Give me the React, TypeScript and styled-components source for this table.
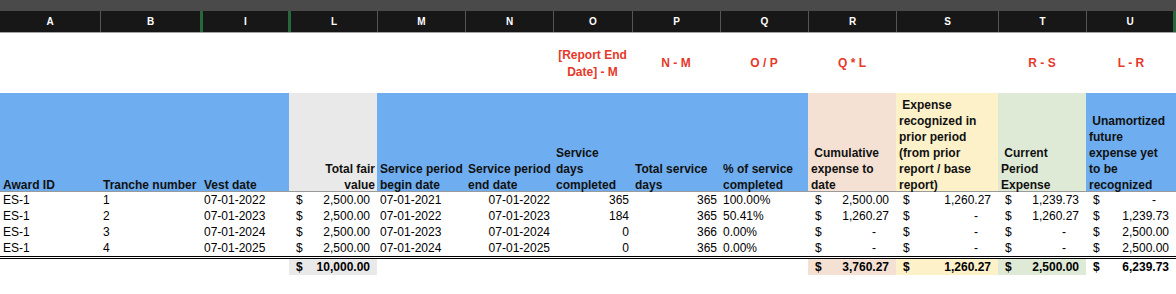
import React from "react";
import styled, { createGlobalStyle } from "styled-components";

const GlobalStyle = createGlobalStyle`
  html, body { margin: 0; padding: 0; background: #ffffff; }
  body { font-family: "Liberation Sans", Arial, sans-serif; }
`;

const BODY_COLS =
  "100px 101px 88px 88px 88px 88px 79px 88px 88px 88px 102px 88px 90px";
const LETTER_COLS =
  "100px 100px 3px 85px 3px 86px 88px 88px 79px 88px 88px 88px 102px 88px 87px 3px";

const BLUE = "#6eaef0";
const GRAY = "#e9e9e9";
const PEACH = "#f5e1d4";
const YELLOW = "#fdf1ca";
const GREEN = "#dfead6";

const Sheet = styled.div`
  width: 1176px;
  height: 294px;
  overflow: hidden;
  background: #fff;
`;

const TopStrip = styled.div`
  height: 11px;
  background: #4a4a4a;
`;

const LetterBar = styled.div`
  display: grid;
  grid-template-columns: ${LETTER_COLS};
  height: 21px;
  background: #171717;
  border-bottom: 1px solid #a3a3a3;
`;

const Letter = styled.div<{ $divider?: boolean }>`
  display: flex;
  align-items: center;
  justify-content: center;
  color: #ffffff;
  font-family: "Liberation Sans", Arial, sans-serif;
  font-weight: bold;
  font-size: 10px;
  border-left: ${(p) => (p.$divider ? "1px solid #555555" : "none")};
`;

const HiddenMark = styled.div`
  background: #27673c;
`;

const Row = styled.div<{ $height: number }>`
  display: grid;
  grid-template-columns: ${BODY_COLS};
  height: ${(p) => p.$height}px;
`;

const HeaderRow = styled(Row)`
  border-bottom: 1px solid #9a9a9a;
`;

const DataRow = styled(Row)`
  & > * {
    padding-top: 4px;
  }
`;

const TotalsRow = styled(Row)`
  border-top: 3px double #000000;
`;

const FormulaCell = styled.div`
  display: flex;
  align-items: center;
  justify-content: center;
  text-align: center;
  color: #e5392a;
  font-weight: bold;
  font-size: 12px;
  line-height: 17px;
  white-space: nowrap;
  padding-top: 1px;
`;

const HeadCell = styled.div<{ $bg: string; $align?: "left" | "right" }>`
  background: ${(p) => p.$bg};
  display: flex;
  flex-direction: column;
  justify-content: flex-end;
  text-align: ${(p) => p.$align ?? "left"};
  padding: 0 2px 0 3px;
  font-weight: bold;
  font-size: 12px;
  line-height: 16px;
  color: #111111;
  white-space: nowrap;
`;

const HeadLines = styled.div`
  margin-bottom: -2px;
`;

const Cell = styled.div<{ $align?: "left" | "right"; $bold?: boolean; $bg?: string }>`
  display: flex;
  align-items: center;
  justify-content: ${(p) => (p.$align === "right" ? "flex-end" : "flex-start")};
  padding: 0 3px;
  font-size: 12px;
  line-height: 16px;
  color: #000000;
  font-weight: ${(p) => (p.$bold ? "bold" : "normal")};
  background: ${(p) => p.$bg ?? "transparent"};
  white-space: nowrap;
`;

const MoneyCell = styled.div<{ $bold?: boolean; $bg?: string }>`
  display: flex;
  align-items: center;
  justify-content: space-between;
  padding: 0 7px 0 7px;
  font-size: 12px;
  line-height: 16px;
  color: #000000;
  font-weight: ${(p) => (p.$bold ? "bold" : "normal")};
  background: ${(p) => p.$bg ?? "transparent"};
  white-space: nowrap;
`;

const Dash = styled.span`
  padding-right: 13px;
`;

type MoneyProps = { value: string | null; bold?: boolean; bg?: string };

const Money = ({ value, bold, bg }: MoneyProps) => (
  <MoneyCell $bold={bold} $bg={bg}>
    <span>$</span>
    {value === null ? <Dash>-</Dash> : <span>{value}</span>}
  </MoneyCell>
);

const letters: { label: string; divider: boolean; hiddenAfter?: boolean }[] = [
  { label: "A", divider: false },
  { label: "B", divider: true, hiddenAfter: true },
  { label: "I", divider: false, hiddenAfter: true },
  { label: "L", divider: false },
  { label: "M", divider: true },
  { label: "N", divider: true },
  { label: "O", divider: true },
  { label: "P", divider: true },
  { label: "Q", divider: true },
  { label: "R", divider: true },
  { label: "S", divider: true },
  { label: "T", divider: true },
  { label: "U", divider: true, hiddenAfter: true },
];

type Head = { lines: string[]; bg: string; align?: "left" | "right" };

const NB = "\u00a0";

const headers: Head[] = [
  { lines: ["Award ID"], bg: BLUE },
  { lines: ["Tranche number"], bg: BLUE },
  { lines: ["Vest date"], bg: BLUE },
  { lines: ["Total fair", "value"], bg: GRAY, align: "right" },
  { lines: ["Service period", "begin date"], bg: BLUE },
  { lines: ["Service period", "end date"], bg: BLUE },
  { lines: ["Service", "days", "completed"], bg: BLUE },
  { lines: ["Total service", "days"], bg: BLUE },
  { lines: ["% of service", "completed"], bg: BLUE },
  { lines: [NB + "Cumulative", "expense to", "date"], bg: PEACH },
  {
    lines: [NB + "Expense", "recognized in", "prior period", "(from prior", "report / base", "report)"],
    bg: YELLOW,
  },
  { lines: [NB + "Current", "Period", "Expense"], bg: GREEN },
  { lines: [NB + "Unamortized", "future", "expense yet", "to be", "recognized"], bg: BLUE },
];

const formulas: string[][] = [
  [], [], [], [], [], [],
  ["[Report End", "Date] - M"],
  ["N - M"],
  ["O / P"],
  ["Q * L"],
  [],
  ["R - S"],
  ["L - R"],
];

type Tranche = {
  b: string;
  i: string;
  m: string;
  n: string;
  o: string;
  p: string;
  q: string;
  r: string | null;
  s: string | null;
  t: string | null;
  u: string | null;
};

const data: Tranche[] = [
  { b: "1", i: "07-01-2022", m: "07-01-2021", n: "07-01-2022", o: "365", p: "365", q: "100.00%", r: "2,500.00", s: "1,260.27", t: "1,239.73", u: null },
  { b: "2", i: "07-01-2023", m: "07-01-2022", n: "07-01-2023", o: "184", p: "365", q: "50.41%", r: "1,260.27", s: null, t: "1,260.27", u: "1,239.73" },
  { b: "3", i: "07-01-2024", m: "07-01-2023", n: "07-01-2024", o: "0", p: "366", q: "0.00%", r: null, s: null, t: null, u: "2,500.00" },
  { b: "4", i: "07-01-2025", m: "07-01-2024", n: "07-01-2025", o: "0", p: "365", q: "0.00%", r: null, s: null, t: null, u: "2,500.00" },
];

export default function App() {
  return (
    <>
      <GlobalStyle />
      <Sheet>
        <TopStrip />
        <LetterBar>
          {letters.map((l) => (
            <React.Fragment key={l.label}>
              <Letter $divider={l.divider}>{l.label}</Letter>
              {l.hiddenAfter && <HiddenMark />}
            </React.Fragment>
          ))}
        </LetterBar>

        <Row $height={60}>
          {formulas.map((f, idx) => (
            <FormulaCell key={idx}>
              <div>
                {f.map((line) => (
                  <div key={line}>{line}</div>
                ))}
              </div>
            </FormulaCell>
          ))}
        </Row>

        <HeaderRow $height={98}>
          {headers.map((h, idx) => (
            <HeadCell key={idx} $bg={h.bg} $align={h.align}>
              <HeadLines>
                {h.lines.map((line) => (
                  <div key={line}>{line}</div>
                ))}
              </HeadLines>
            </HeadCell>
          ))}
        </HeaderRow>

        {data.map((d) => (
          <DataRow $height={16} key={d.b}>
            <Cell>ES-1</Cell>
            <Cell>{d.b}</Cell>
            <Cell>{d.i}</Cell>
            <Money value="2,500.00" />
            <Cell>{d.m}</Cell>
            <Cell $align="right">{d.n}</Cell>
            <Cell $align="right">{d.o}</Cell>
            <Cell $align="right">{d.p}</Cell>
            <Cell>{d.q}</Cell>
            <Money value={d.r} />
            <Money value={d.s} />
            <Money value={d.t} />
            <Money value={d.u} />
          </DataRow>
        ))}

        <TotalsRow $height={16}>
          <Cell />
          <Cell />
          <Cell />
          <Money value="10,000.00" bold bg={GRAY} />
          <Cell />
          <Cell />
          <Cell />
          <Cell />
          <Cell />
          <Money value="3,760.27" bold bg={PEACH} />
          <Money value="1,260.27" bold bg={YELLOW} />
          <Money value="2,500.00" bold bg={GREEN} />
          <Money value="6,239.73" bold />
        </TotalsRow>
      </Sheet>
    </>
  );
}
